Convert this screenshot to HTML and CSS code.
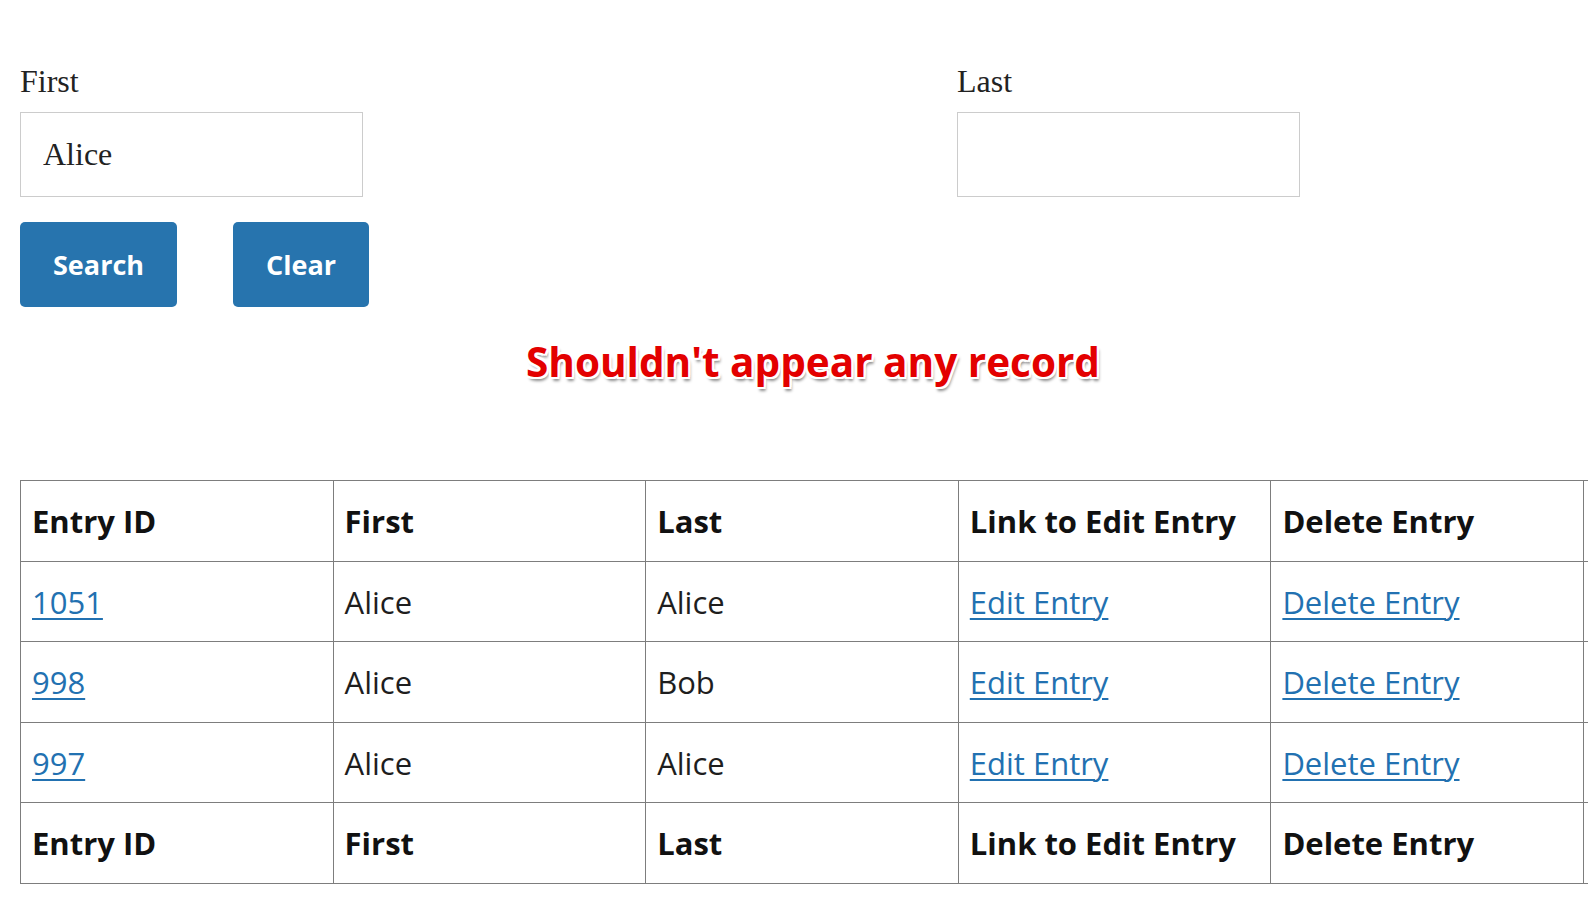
FILE: index.html
```html
<!DOCTYPE html>
<html lang="en">
<head>
<meta charset="utf-8">
<title>Search entries</title>
<link rel="stylesheet" href="styles.css">
</head>
<body>
<div class="page">
  <form class="search">
    <div class="fields">
      <div class="field">
        <label for="first">First</label>
        <input id="first" type="text" value="Alice">
      </div>
      <div class="field">
        <label for="last">Last</label>
        <input id="last" type="text" value="">
      </div>
    </div>
    <div class="buttons">
      <button type="button" class="btn">Search</button>
      <button type="button" class="btn">Clear</button>
    </div>
  </form>
  <p class="notice">Shouldn't appear any record</p>
  <table class="entries">
    <colgroup>
      <col class="c"><col class="c"><col class="c"><col class="c"><col class="c"><col>
    </colgroup>
    <thead>
      <tr><th>Entry ID</th><th>First</th><th>Last</th><th>Link to Edit Entry</th><th>Delete Entry</th><th></th></tr>
    </thead>
    <tbody>
      <tr><td><a href="#">1051</a></td><td>Alice</td><td>Alice</td><td><a href="#">Edit Entry</a></td><td><a href="#">Delete Entry</a></td><td></td></tr>
      <tr><td><a href="#">998</a></td><td>Alice</td><td>Bob</td><td><a href="#">Edit Entry</a></td><td><a href="#">Delete Entry</a></td><td></td></tr>
      <tr><td><a href="#">997</a></td><td>Alice</td><td>Alice</td><td><a href="#">Edit Entry</a></td><td><a href="#">Delete Entry</a></td><td></td></tr>
    </tbody>
    <tfoot>
      <tr><th>Entry ID</th><th>First</th><th>Last</th><th>Link to Edit Entry</th><th>Delete Entry</th><th></th></tr>
    </tfoot>
  </table>
</div>
</body>
</html>
```

FILE: styles.css
```css
html, body {
  margin: 0;
  padding: 0;
  background: #fff;
  overflow: hidden;
}

.page {
  width: 1586px;
  padding: 63px 0 0 20px;
}

.search {
  margin: 0;
}

.fields {
  display: grid;
  grid-template-columns: 937px 1fr;
}

.field label {
  display: block;
  font: 32px "Liberation Serif", serif;
  color: #222;
  margin-bottom: 12px;
}

.field input {
  box-sizing: border-box;
  display: block;
  width: 343px;
  height: 85px;
  border: 1px solid #cccccc;
  border-radius: 0;
  padding: 0 22px;
  margin: 0;
  font: 32px "Liberation Serif", serif;
  color: #222;
  background: #fff;
  outline: none;
}

.buttons {
  display: flex;
  gap: 56px;
  margin-top: 25px;
}

.btn {
  height: 85px;
  padding: 0 33px;
  margin: 0;
  background: #2774ae;
  color: #fff;
  border: 0;
  border-radius: 5px;
  font: 700 27px "Open Sans", sans-serif;
  cursor: pointer;
}

.notice {
  margin: 27px 0 91px;
  text-align: center;
  font: 700 40.5px "Open Sans", sans-serif;
  color: #e30000;
  text-shadow:
    -2px -2px 0 #fff, 2px -2px 0 #fff, -2px 2px 0 #fff, 2px 2px 0 #fff,
    0 -2px 0 #fff, 0 2px 0 #fff, -2px 0 0 #fff, 2px 0 0 #fff,
    2px 4px 3px rgba(0, 0, 0, 0.45);
}

.entries {
  width: 1586px;
  table-layout: fixed;
  border-collapse: collapse;
  font: 31px "Open Sans", sans-serif;
  color: #1e1e1e;
}

.entries col.c {
  width: 312.6px;
}

.entries th,
.entries td {
  border: 1px solid #7d7d7d;
  padding: 18px 11px 17.5px;
  line-height: 44px;
  text-align: left;
  white-space: nowrap;
  vertical-align: middle;
}

.entries th {
  font-weight: 700;
  color: #111;
}

.entries a {
  color: #2271b1;
  text-decoration: underline;
  text-decoration-thickness: 2px;
  text-underline-offset: 4px;
}
```
